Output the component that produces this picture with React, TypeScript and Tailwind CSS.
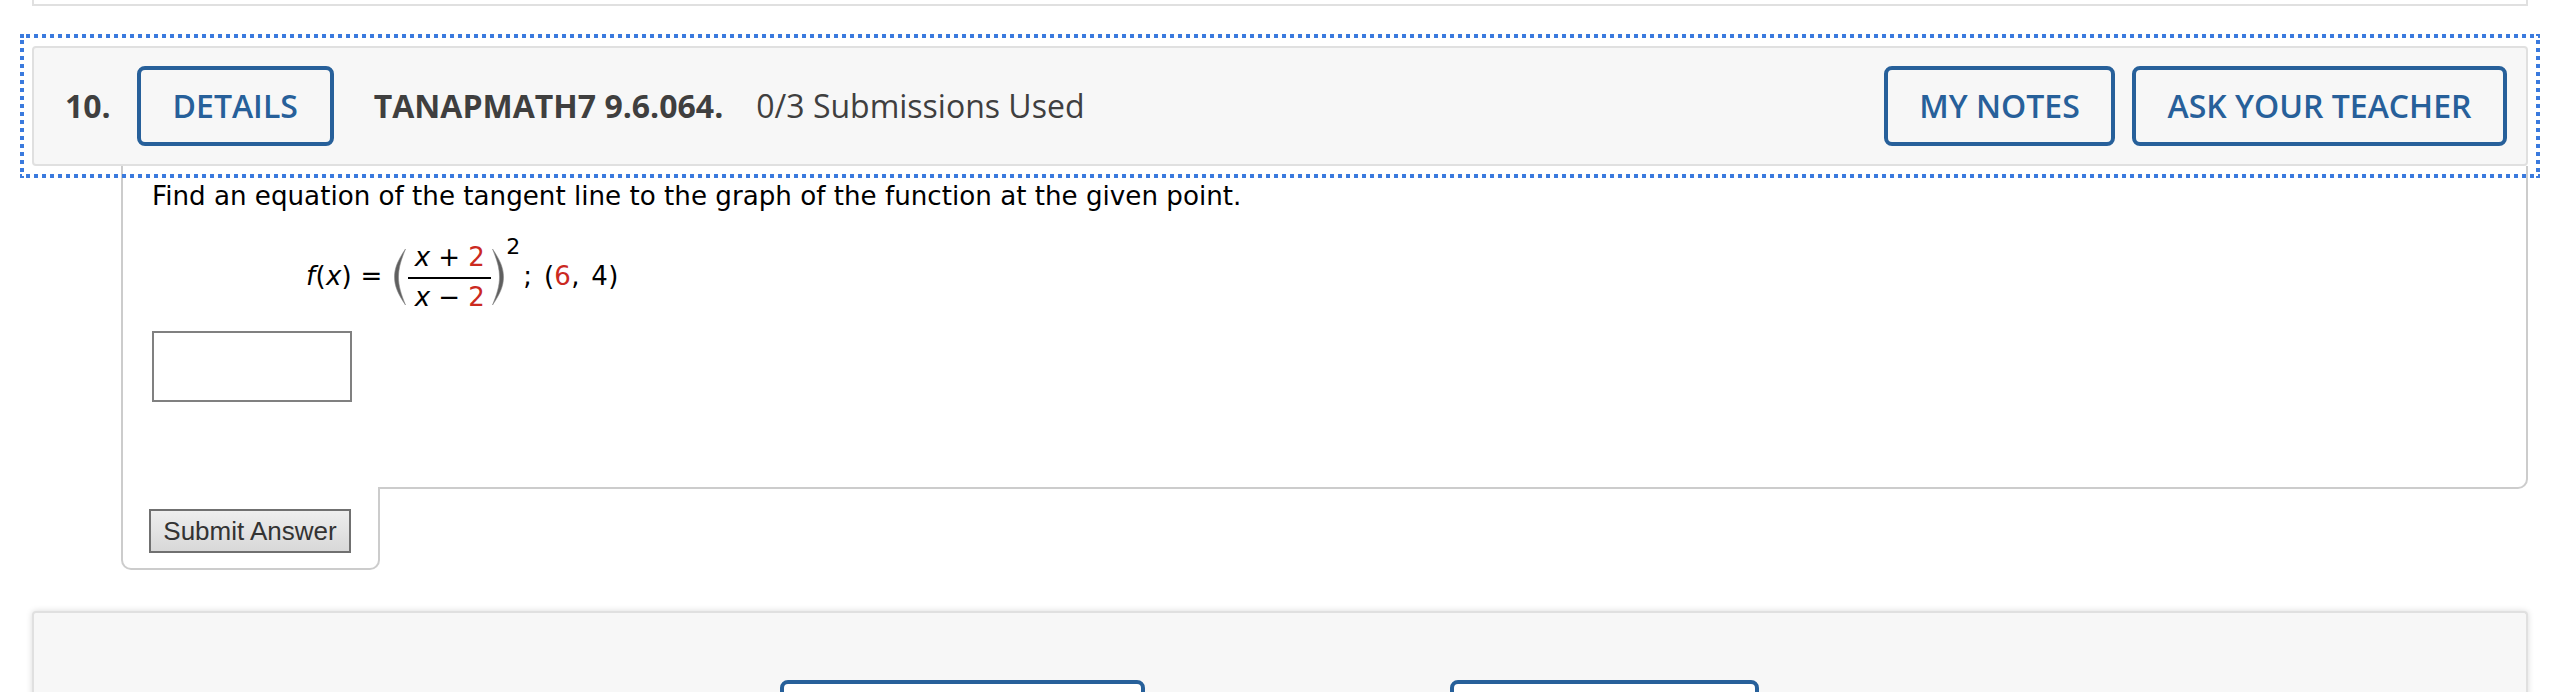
export default function App() {
  const btn = "flex h-[80px] items-center justify-center rounded-[8px] border-[4px] border-[#27609a] text-[32px] font-semibold text-[#27609a]";
  const paren = "h-[58px] w-[13px] shrink-0";
  return (
    <div className="h-[692px] w-[2560px] overflow-hidden bg-white font-['Open_Sans',sans-serif]">
      <div className="mx-[32px] h-[6px] border-x-[2px] border-b-[2px] border-[#e0e0e0]" />
      <div className="mx-[32px] mt-[40px]">
        <div className="relative">
          <div className="flex h-[120px] items-center rounded-[4px] border-[2px] border-[#e0e0e0] bg-[#f7f7f7] pl-[31px] pr-[19px] text-[32px] text-[#3f3f3f]">
            <span className="font-bold">10.</span>
            <div className={`${btn} ml-[26px] w-[197px]`}>DETAILS</div>
            <span className="ml-[40px] font-bold">TANAPMATH7 9.6.064.</span>
            <span className="ml-[33px]">0/3 Submissions Used</span>
            <div className={`${btn} ml-auto w-[231px]`}>MY NOTES</div>
            <div className={`${btn} ml-[17px] w-[375px]`}>ASK YOUR TEACHER</div>
          </div>
          <div className="pointer-events-none absolute -inset-[12px] bg-[linear-gradient(#3a7ade,#3a7ade),linear-gradient(90deg,#3a7ade_50%,transparent_50%),linear-gradient(90deg,#3a7ade_50%,transparent_50%),linear-gradient(#3a7ade_50%,transparent_50%),linear-gradient(#3a7ade_50%,transparent_50%)] [background-position:0_0,-2px_0,-2px_100%,0_-2px,100%_-2px] [background-repeat:no-repeat,repeat-x,repeat-x,repeat-y,repeat-y] [background-size:4px_4px,8px_4px,8px_4px,4px_8px,4px_8px]" />
        </div>
        <div className="ml-[89px] font-['DejaVu_Sans',sans-serif] text-black">
          <div className="h-[323px] rounded-br-[10px] border-x-[2px] border-b-[2px] border-[#cccccc] pl-[29px] pt-[13px]">
            <p className="text-[26.16px] leading-[34px]">Find an equation of the tangent line to the graph of the function at the given point.</p>
            <div className="ml-[154px] mt-[31px] flex h-[66px] items-center text-[26px] leading-none tracking-[0.3px]">
              <span className="whitespace-pre pb-[3px]"><i>f</i>(<i>x</i>) = </span>
              <svg viewBox="0 0 13 58" className={`${paren} ml-[3px]`}>
                <path d="M11.5 1 C4 12 0.5 20 0.5 29 C0.5 38 4 46 11.5 57 C7 46 4.5 38 4.5 29 C4.5 20 7 12 11.5 1 Z" fill="#5f5f5f" stroke="#8a8a8a" strokeWidth="0.6" />
              </svg>
              <div className="ml-[1px] flex w-[83px] flex-col items-center tracking-normal">
                <span className="whitespace-pre pb-[8px] leading-[24px]"><i>x</i> + <span className="text-[#cb2a1f]">2</span></span>
                <span className="h-[2px] w-full bg-black" />
                <span className="whitespace-pre pt-[6px] leading-[24px]"><i>x</i> − <span className="text-[#cb2a1f]">2</span></span>
              </div>
              <svg viewBox="0 0 13 58" className={paren}>
                <path d="M1.5 1 C9 12 12.5 20 12.5 29 C12.5 38 9 46 1.5 57 C6 46 8.5 38 8.5 29 C8.5 20 6 12 1.5 1 Z" fill="#5f5f5f" stroke="#8a8a8a" strokeWidth="0.6" />
              </svg>
              <sup className="mb-[38px] ml-[2px] text-[22px] leading-none tracking-normal">2</sup>
              <span className="ml-[3px] whitespace-pre pb-[3px] [word-spacing:3px]">; (<span className="text-[#cb2a1f]">6</span>, 4)</span>
            </div>
            <div className="mt-[21px] h-[71px] w-[200px] border-[2px] border-[#808080] bg-white" />
          </div>
          <div className="-mt-[2px] h-[83px] w-[259px] rounded-b-[10px] border-x-[2px] border-b-[2px] border-[#cccccc] bg-white pl-[26px] pt-[22px]">
            <div className="flex h-[44px] w-[202px] items-center justify-center border-[2px] border-[#707070] bg-gradient-to-b from-[#eeeeee] to-[#d8d8d8] font-['Liberation_Sans',sans-serif] text-[26px] text-[#333333]">Submit Answer</div>
          </div>
        </div>
        <div className="mt-[41px] flex h-[200px] gap-[305px] rounded-t-[4px] border-x-[2px] border-t-[2px] border-[#e0e0e0] bg-[#f7f7f7] pl-[746px] pt-[67px] shadow-[0_0_6px_rgba(0,0,0,0.15)]">
          <div className="h-[80px] w-[365px] rounded-[8px] border-[4px] border-[#27609a] bg-white" />
          <div className="h-[80px] w-[309px] rounded-[8px] border-[4px] border-[#27609a] bg-white" />
        </div>
      </div>
    </div>
  );
}
